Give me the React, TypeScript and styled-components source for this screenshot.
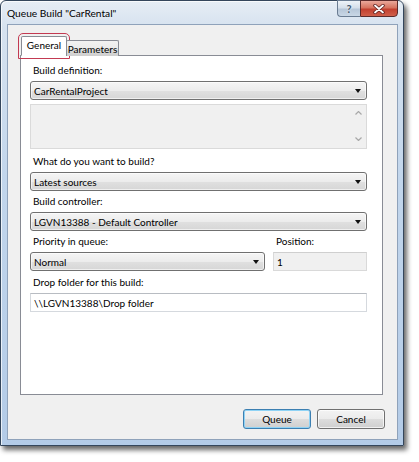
import React from "react";
import styled, { createGlobalStyle, css } from "styled-components";

const GlobalStyle = createGlobalStyle`
  html, body { margin: 0; padding: 0; background: #ffffff; }
  body { font-family: Lato, "Liberation Sans", Arial, sans-serif; font-size: 10px; color: #000; }
  * { box-sizing: border-box; }
`;

const Page = styled.div`
  width: 419px;
  height: 462px;
  background: #ffffff;
`;

const Window = styled.div`
  width: 404px;
  height: 446px;
  border: 1px solid #34465c;
  border-radius: 6px 6px 0 0;
  padding: 0 5px 5px 6px;
  background: linear-gradient(180deg, #e6edf5 0%, #d6e2ef 6%, #c2d6ec 40%, #b3cbe7 100%);
  box-shadow: 3px 4px 5px rgba(0, 0, 0, 0.6), inset 1px 1px 0 rgba(255, 255, 255, 0.7);
  display: flex;
  flex-direction: column;
`;

const TitleBar = styled.div`
  height: 23px;
  display: flex;
  align-items: flex-start;
  justify-content: space-between;
`;

const Title = styled.div`
  padding-top: 6px;
  font-size: 10.2px;
  color: #000;
  text-shadow: 0 0 6px rgba(255, 255, 255, 0.9);
`;

const CaptionButtons = styled.div`
  display: flex;
  margin-top: -1px;
`;

const CaptionButton = styled.div<{ $kind: "help" | "close" }>`
  height: 17px;
  display: flex;
  align-items: center;
  justify-content: center;
  ${(p) =>
    p.$kind === "help"
      ? css`
          width: 23px;
          border: 1px solid #6a7c92;
          border-right: none;
          border-radius: 0 0 0 4px;
          background: linear-gradient(180deg, #eef3f8 0%, #d5dfea 45%, #b6c6d8 55%, #c9d7e6 100%);
          color: #42586f;
          font-size: 11px;
          font-weight: 700;
          text-shadow: 0 0 2px #fff;
        `
      : css`
          width: 38px;
          border: 1px solid #5b2a2a;
          border-radius: 0 0 4px 0;
          background: linear-gradient(180deg, #eaa89b 0%, #d6735f 45%, #c2402f 55%, #d0604b 100%);
        `}
`;

const Client = styled.div`
  height: 416px;
  border: 1px solid #8fa2ba;
  background: #f0f0f0;
  padding: 11px 15px 0 12px;
  display: flex;
  flex-direction: column;
`;

const TabStrip = styled.div`
  display: flex;
  align-items: flex-end;
  height: 20px;
  padding-left: 1px;
  position: relative;
  z-index: 1;
`;

const Tab = styled.div<{ $selected?: boolean; $annotated?: boolean }>`
  border: 1px solid #898c95;
  border-radius: 2px 2px 0 0;
  padding: 0 4px;
  display: flex;
  align-items: center;
  justify-content: center;
  color: #000;
  ${(p) =>
    p.$selected
      ? css`
          height: 20px;
          width: 46px;
          background: #ffffff;
          border-bottom-color: #ffffff;
          padding-bottom: 2px;
        `
      : css`
          height: 16px;
          margin-left: -1px;
          width: 53px;
          background: linear-gradient(180deg, #f2f2f2 0%, #ebebeb 50%, #dddddd 51%, #cfcfcf 100%);
          border-bottom: none;
          padding-top: 1px;
        `}
  ${(p) =>
    p.$annotated &&
    css`
      outline: 1px solid #c33a52;
      outline-offset: 2px;
    `}
`;

const TabPanel = styled.div`
  margin-top: -1px;
  width: 363px;
  height: 340px;
  border: 1px solid #898c95;
  background: #ffffff;
  padding: 8px 15px 0 9px;
  display: flex;
  flex-direction: column;
`;

const FieldLabel = styled.div<{ $mt?: number }>`
  height: 12px;
  line-height: 12px;
  margin-top: ${(p) => p.$mt ?? 0}px;
  margin-bottom: 5px;
  padding-left: 3px;
  color: #000;
`;

const ComboBox = styled.div`
  height: 19px;
  border: 1px solid #707070;
  border-radius: 3px;
  background: linear-gradient(180deg, #f5f5f5 0%, #ececec 50%, #e0e0e0 51%, #d6d6d6 100%);
  box-shadow: inset 0 0 0 1px rgba(255, 255, 255, 0.6);
  display: flex;
  align-items: center;
  justify-content: space-between;
  padding: 0 4px 0 3px;
  color: #000;
`;

const Arrow = styled.span`
  width: 0;
  height: 0;
  border-left: 3.5px solid transparent;
  border-right: 3.5px solid transparent;
  border-top: 4px solid #111;
  margin-right: 1px;
`;

const Description = styled.div`
  margin-top: 4px;
  height: 45px;
  border: 1px solid #dadada;
  background: #f0f0f0;
  display: flex;
  justify-content: flex-end;
`;

const ScrollBar = styled.div`
  width: 15px;
  display: flex;
  flex-direction: column;
  justify-content: space-between;
  align-items: center;
  padding: 6px 0 7px;
`;

const TextField = styled.div<{ $disabled?: boolean }>`
  height: 19px;
  border: 1px solid ${(p) => (p.$disabled ? "#d9d9d9" : "#d5d9de")};
  border-top-color: ${(p) => (p.$disabled ? "#cfcfcf" : "#b8bcc2")};
  background: ${(p) => (p.$disabled ? "#f0f0f0" : "#ffffff")};
  display: flex;
  align-items: center;
  padding-left: 3px;
  color: #000;
`;

const SplitRow = styled.div`
  display: grid;
  grid-template-columns: 235px 1fr;
  column-gap: 8px;
`;

const Column = styled.div`
  display: flex;
  flex-direction: column;
`;

const ButtonRow = styled.div`
  margin-top: 14px;
  display: flex;
  justify-content: flex-end;
  gap: 6px;
  margin-right: -3px;
`;

const DialogButton = styled.div<{ $default?: boolean }>`
  width: 68px;
  height: 20px;
  border-radius: 3px;
  border: 1px solid ${(p) => (p.$default ? "#3c7fb1" : "#707070")};
  background: linear-gradient(180deg, #f3f3f3 0%, #ebebeb 50%, #dddddd 51%, #cfcfcf 100%);
  box-shadow: ${(p) =>
    p.$default ? "inset 0 0 0 1px #8fd3f5" : "inset 0 0 0 1px rgba(255,255,255,0.7)"};
  display: flex;
  align-items: center;
  justify-content: center;
  color: #000;
`;

function Chevron({ up }: { up?: boolean }) {
  return (
    <svg width="7" height="4" viewBox="0 0 7 4">
      <path d={up ? "M0.5 3.5 L3.5 0.5 L6.5 3.5" : "M0.5 0.5 L3.5 3.5 L6.5 0.5"} stroke="#a8a8a8" strokeWidth="1.2" fill="none" />
    </svg>
  );
}

function CloseGlyph() {
  return (
    <svg width="12" height="10" viewBox="0 0 12 10">
      <path d="M2 1.5 L10 8.5 M10 1.5 L2 8.5" stroke="#5a1e1e" strokeWidth="3.4" strokeLinecap="round" />
      <path d="M2 1.5 L10 8.5 M10 1.5 L2 8.5" stroke="#ffffff" strokeWidth="1.8" strokeLinecap="round" />
    </svg>
  );
}

function Combo({ value }: { value: string }) {
  return (
    <ComboBox>
      <span>{value}</span>
      <Arrow />
    </ComboBox>
  );
}

export default function App() {
  return (
    <>
      <GlobalStyle />
      <Page>
        <Window>
          <TitleBar>
            <Title>Queue Build "CarRental"</Title>
            <CaptionButtons>
              <CaptionButton $kind="help">?</CaptionButton>
              <CaptionButton $kind="close">
                <CloseGlyph />
              </CaptionButton>
            </CaptionButtons>
          </TitleBar>
          <Client>
            <TabStrip>
              <Tab $selected $annotated>General</Tab>
              <Tab>Parameters</Tab>
            </TabStrip>
            <TabPanel>
              <FieldLabel>Build definition:</FieldLabel>
              <Combo value="CarRentalProject" />
              <Description>
                <ScrollBar>
                  <Chevron up />
                  <Chevron />
                </ScrollBar>
              </Description>
              <FieldLabel $mt={6}>What do you want to build?</FieldLabel>
              <Combo value="Latest sources" />
              <FieldLabel $mt={4}>Build controller:</FieldLabel>
              <Combo value="LGVN13388 - Default Controller" />
              <SplitRow>
                <Column>
                  <FieldLabel $mt={4}>Priority in queue:</FieldLabel>
                  <Combo value="Normal" />
                </Column>
                <Column>
                  <FieldLabel $mt={4}>Position:</FieldLabel>
                  <TextField $disabled>1</TextField>
                </Column>
              </SplitRow>
              <FieldLabel $mt={5}>Drop folder for this build:</FieldLabel>
              <TextField>\\LGVN13388\Drop folder</TextField>
            </TabPanel>
            <ButtonRow>
              <DialogButton $default>Queue</DialogButton>
              <DialogButton>Cancel</DialogButton>
            </ButtonRow>
          </Client>
        </Window>
      </Page>
    </>
  );
}
